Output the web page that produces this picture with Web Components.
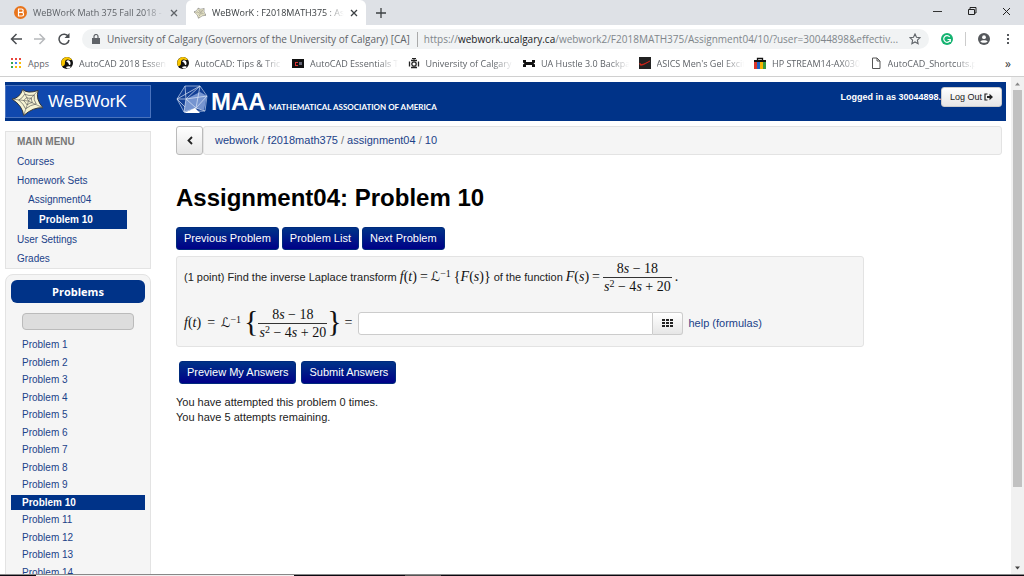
<!DOCTYPE html>
<html lang="en">
<head>
<meta charset="utf-8">
<title>WeBWorK : F2018MATH375 : Assignment04 : 10</title>
<style>
    html, body {
        height: 100%;
        margin: 0;
    }
    body {
        --blue: #003388;
        --link: #1b4289;
        --well: #f5f5f5;
        --line: #e3e3e3;
        --ui: "Open Sans", "Noto Sans", sans-serif;
        display: flex;
        flex-direction: column;
        overflow: hidden;
        background: #fff;
        color: #222;
        font: 10px/15px "Liberation Sans", Arial, sans-serif;
    }
</style>
</head>
<body>
    <browser-tabs></browser-tabs>
    <browser-toolbar></browser-toolbar>
    <bookmark-bar>
        <bookmark-link label="AutoCAD 2018 Essen" icon="lynda"></bookmark-link>
        <bookmark-link label="AutoCAD: Tips &amp; Tric" icon="lynda"></bookmark-link>
        <bookmark-link label="AutoCAD Essentials T" icon="dark"></bookmark-link>
        <bookmark-link label="University of Calgary" icon="crest"></bookmark-link>
        <bookmark-link label="UA Hustle 3.0 Backpa" icon="ua"></bookmark-link>
        <bookmark-link label="ASICS Men's Gel Excit" icon="swoosh"></bookmark-link>
        <bookmark-link label="HP STREAM14-AX030" icon="bag"></bookmark-link>
        <bookmark-link label="AutoCAD_Shortcuts.p" icon="file"></bookmark-link>
    </bookmark-bar>
    <page-view>
        <ww-header slot="header" user="30044898"></ww-header>
        <ww-menu slot="side"></ww-menu>
        <ww-problems slot="side" count="14" current="10"></ww-problems>
        <ww-breadcrumb></ww-breadcrumb>
        <ww-problem heading="Assignment04: Problem 10">
            <ww-button slot="nav">Previous Problem</ww-button>
            <ww-button slot="nav">Problem List</ww-button>
            <ww-button slot="nav">Next Problem</ww-button>
            <ww-question></ww-question>
            <ww-button slot="actions">Preview My Answers</ww-button>
            <ww-button slot="actions">Submit Answers</ww-button>
            <div slot="status">You have attempted this problem 0 times.</div>
            <div slot="status">You have 5 attempts remaining.</div>
        </ww-problem>
    </page-view>
    <task-bar></task-bar>

<script>
class Base extends HTMLElement {
    connectedCallback() {
        if (this.shadowRoot) {
            return;
        }
        const template = document.createElement("template");
        template.innerHTML = "<style>:host, * { box-sizing: border-box; }</style>" + this.render();
        this.attachShadow({mode: "open"}).appendChild(template.content);
    }
}

const star = `
    <svg viewBox="0 0 32 28" class="star">
        <path d="M0 11Q8 10 11 1 16 6 27 2 24 11 32 20 22 19 12 28 11 18 0 11Z" fill="#f6f3d3" stroke="#333" stroke-width="1"/>
        <path d="M0 11 17 13M11 1 17 13M27 2 17 13M32 20 17 13M12 28 17 13" stroke="#555" stroke-width=".6"/>
        <path d="M7 12Q11 10 13 6 17 8 23 7 22 12 25 16 19 17 14 21 12 16 7 12ZM12 12.500Q14 11 15 9.500 17 10.500 20 10 20 12.500 21 14.500 18 15 15.500 17 14 14.500 12 12.500Z" fill="none" stroke="#555" stroke-width=".7"/>
    </svg>`;

customElements.define("browser-tabs", class extends Base {
    render() {
        return `
            <style>
                :host { display: flex; height: 25px; background: #dee1e6; font: 9px/25px var(--ui); color: #5f6368; }
                .tab { display: flex; align-items: center; gap: 6px; width: 180px; padding: 0 8px; }
                .tab.first { padding-left: 6px; margin-left: 8px; width: 178px; }
                .active { background: #fff; border-radius: 6px 6px 0 0; color: #3c4043; }
                .name { flex: 1; min-width: 0; white-space: nowrap; mask-image: linear-gradient(90deg, #000 85%, transparent); }
                button { padding: 0; border: 0; background: none; display: flex; }
                svg { flex: none; }
                .star { width: 12px; height: 12px; }
                .new { align-self: center; margin-left: 10px; }
                .window { display: flex; align-items: center; gap: 25px; margin: 0 13px 3px auto; }
            </style>
            <div class="tab first">
                <svg width="13" height="13" viewBox="0 0 13 13"><circle cx="6.500" cy="6.500" r="6.500" fill="#e8741c"/><path d="M4 3h3.500a1.700 1.700 0 0 1 0 3.400H5M4.500 3v7h3.300a1.800 1.800 0 0 0 0-3.600" fill="none" stroke="#fff" stroke-width="1.200"/></svg>
                <span class="name">WeBWorK Math 375 Fall 2018 - M</span>
                <button aria-label="Close tab"><svg width="8" height="8" viewBox="0 0 8 8"><path d="M1 1l6 6M7 1l-6 6" stroke="#5f6368" stroke-width="1.300"/></svg></button>
            </div>
            <div class="tab active">
                ${star}
                <span class="name">WeBWorK : F2018MATH375 : Ass</span>
                <button aria-label="Close tab"><svg width="8" height="8" viewBox="0 0 8 8"><path d="M1 1l6 6M7 1l-6 6" stroke="#3c4043" stroke-width="1.300"/></svg></button>
            </div>
            <button class="new" aria-label="New tab"><svg width="10" height="10" viewBox="0 0 10 10"><path d="M5 0v10M0 5h10" stroke="#3c4043" stroke-width="1.300"/></svg></button>
            <div class="window">
                <button aria-label="Minimize"><svg width="9" height="9" viewBox="0 0 9 9"><path d="M0 4.500h9" stroke="#333"/></svg></button>
                <button aria-label="Restore"><svg width="10" height="10" viewBox="0 0 10 10"><path d="M1.500 3.500h6v5h-6zM3 3V1.500h6V7H8" fill="none" stroke="#222"/></svg></button>
                <button aria-label="Close"><svg width="9" height="9" viewBox="0 0 9 9"><path d="M1 1l7 7M8 1L1 8" stroke="#222"/></svg></button>
            </div>`;
    }
});

customElements.define("browser-toolbar", class extends Base {
    render() {
        return `
            <style>
                :host { display: flex; align-items: center; gap: 12px; height: 28px; padding: 0 10px; background: #fff; }
                button { padding: 0; border: 0; background: none; display: flex; }
                svg { flex: none; }
                .box { flex: 1; display: flex; align-items: center; height: 20px; padding: 0 8px 0 10px; border-radius: 10px; background: #f1f3f4; min-width: 0; }
                .site { padding: 0 7px; font: 10px/15px var(--ui); color: #5f6368; white-space: nowrap; }
                .url { flex: 1; padding: 0 6px; border-left: 1px solid #aaa; font: 10px/15px var(--ui); color: #80868b; white-space: nowrap; }
                .url b { font-weight: 400; color: #202124; }
                .sep { width: 1px; height: 14px; background: #ccc; }
            </style>
            <button aria-label="Back"><svg width="12" height="12" viewBox="0 0 12 12"><path d="M12 6H2M6.500 1l-5 5 5 5" fill="none" stroke="#4a4d51" stroke-width="1.500"/></svg></button>
            <button aria-label="Forward"><svg width="12" height="12" viewBox="0 0 12 12"><path d="M0 6h10M5.500 1l5 5-5 5" fill="none" stroke="#b7b9bc" stroke-width="1.500"/></svg></button>
            <button aria-label="Reload"><svg width="12" height="12" viewBox="0 0 12 12"><path d="M10.300 3.500A5 5 0 1 0 11 7" fill="none" stroke="#4a4d51" stroke-width="1.500"/><path d="M11.500 0v5h-5z" fill="#4a4d51"/></svg></button>
            <div class="box">
                <svg width="8" height="10" viewBox="0 0 8 10"><path d="M0 4h8v6H0z" fill="#5f6368"/><path d="M2 4V2.500a2 2 0 0 1 4 0V4" fill="none" stroke="#5f6368" stroke-width="1.200"/></svg>
                <span class="site">University of Calgary (Governors of the University of Calgary) [CA]</span>
                <span class="url">https://<b>webwork.ucalgary.ca</b>/webwork2/F2018MATH375/Assignment04/10/?user=30044898&amp;effectiv...</span>
                <button aria-label="Bookmark"><svg width="12" height="12" viewBox="0 0 12 12"><path d="M6 1l1.500 3.300 3.500.4-2.600 2.400.7 3.600L6 8.900l-3.100 1.800.7-3.600L1 4.700l3.500-.4z" fill="none" stroke="#5f6368" stroke-width="1.100"/></svg></button>
            </div>
            <svg width="12" height="12" viewBox="0 0 12 12"><circle cx="6" cy="6" r="6" fill="#15b371"/><path d="M8.700 4A3.300 3.300 0 1 0 9.300 6.500H6.500M9.300 6.500V9" fill="none" stroke="#fff" stroke-width="1.200"/></svg>
            <span class="sep"></span>
            <svg width="12" height="12" viewBox="0 0 12 12"><circle cx="6" cy="6" r="6" fill="#55585c"/><circle cx="6" cy="4.200" r="1.900" fill="#fff"/><path d="M2.300 8.500C3.500 6.800 8.500 6.800 9.700 8.500 8.500 10.200 3.500 10.200 2.300 8.500Z" fill="#fff"/></svg>
            <button aria-label="Menu"><svg width="12" height="12" viewBox="0 0 12 12" fill="#55585c"><path d="M5 1h2v2H5zM5 5h2v2H5zM5 9h2v2H5z"/></svg></button>`;
    }
});

customElements.define("bookmark-bar", class extends Base {
    render() {
        return `
            <style>
                :host { display: flex; align-items: center; height: 24px; padding: 0 13px 3px 11px; border-bottom: 1px solid #d0d0d0; background: #fff; font: 9px/15px var(--ui); color: #5f6368; }
                .apps { display: flex; align-items: center; gap: 7px; width: 50px; color: inherit; text-decoration: none; }
                .items { flex: 1; display: flex; min-width: 0; }
                .more { width: 26px; font-size: 12px; text-align: right; color: #333; }
            </style>
            <a class="apps" href="#"><svg width="10" height="10" viewBox="0 0 10 10"><path d="M0 0h2v2H0zM4 0h2v2H4zM8 0h2v2H8z" fill="#e8453c"/><path d="M0 4h2v2H0zM0 8h2v2H0z" fill="#34a853"/><path d="M4 4h2v2H4z" fill="#4285f4"/><path d="M8 4h2v2H8zM4 8h2v2H4zM8 8h2v2H8z" fill="#fbbc05"/></svg>Apps</a>
            <div class="items"><slot></slot></div>
            <span class="more">»</span>`;
    }
});

const bookmarkIcons = {
    lynda: `<circle cx="6" cy="6" r="6" fill="#111"/><path d="M6 0A6 6 0 0 0 1 9C4 9 4 7 4 5 4 3 6 2 8 3L11 3A6 6 0 0 0 6 0Z" fill="#f8c500"/><path d="M5 4.500C7 2 10 4 9.500 7 9 9 8 8 7.500 6.500 7 5 6 5 5 4.500ZM5 10c2-1 4-1 5 0-2 2-4 2-5 0Z" fill="#fff"/>`,
    dark: `<path d="M0 2h12v9H0z" fill="#111"/><path d="M3 5h3v1H4v2h2v1H3z" fill="#d33"/><path d="M7 5h3v3H7z" fill="#667"/>`,
    crest: `<path d="M3 3.500h6M1.500 4.500v5M10.500 4.500v5M3 10.500h6" stroke="#222" stroke-width="1.300"/><path d="M4 1.500h4M6 1v2" stroke="#222"/><circle cx="6" cy="7" r="2.200" fill="#fff" stroke="#222" stroke-width="1.300"/>`,
    ua: `<path d="M0 3h3v2h6V3h3v2.500L10.500 6.500 12 7.500V10H9V8H3v2H0V7.500L1.500 6.500 0 5.500Z" fill="#111"/>`,
    swoosh: `<path d="M0 0h12v12H0z" fill="#222"/><path d="M1 6c0 3 4 1 10-2C6 7 3 9 1 8z" fill="#e2231a" stroke="#e2231a" stroke-width=".6"/>`,
    bag: `<path d="M3.500 5V1.500h5V5" fill="none" stroke="#111" stroke-width="1.300"/><path d="M0 3h12v2H0z" fill="#111"/><path d="M0 5h3v7H0z" fill="#d8352a"/><path d="M3 5h3v7H3z" fill="#1c64c8"/><path d="M6 5h3v7H6z" fill="#f5b400"/><path d="M9 5h3v7H9z" fill="#3a9b3f"/>`,
    file: `<path d="M2.500 1h4.500l3 3v7.500H2.500zM7 1v3h3" fill="none" stroke="#555"/>`
};

customElements.define("bookmark-link", class extends Base {
    render() {
        return `
            <style>
                :host { flex: 1; display: block; min-width: 0; }
                a { display: flex; align-items: center; gap: 6px; padding-right: 8px; color: inherit; text-decoration: none; }
                svg { flex: none; }
                span { flex: 1; white-space: nowrap; mask-image: linear-gradient(90deg, #000 75%, transparent 98%); }
            </style>
            <a href="#"><svg width="12" height="12" viewBox="0 0 12 12">${bookmarkIcons[this.getAttribute("icon")]}</svg><span>${this.getAttribute("label")}</span></a>`;
    }
});

customElements.define("page-view", class extends Base {
    render() {
        return `
            <style>
                :host { flex: 1; display: flex; min-height: 0; }
                .page { flex: 1; min-width: 0; padding: 5px 5px 0; overflow: hidden; }
                .columns { display: grid; grid-template-columns: 146px 1fr; column-gap: 25px; }
                .side { display: flex; flex-direction: column; gap: 5px; padding-top: 10px; }
                main { min-width: 0; padding: 5px 4px 0 0; }
                .scroll { display: flex; flex-direction: column; align-items: center; width: 13px; padding: 5px 0 4px; background: #f1f1f1; }
                .scroll svg { flex: none; }
                .thumb { flex: 5; width: 9px; margin-top: 4px; background: #c1c1c1; }
                .rest { flex: 1; }
            </style>
            <div class="page">
                <slot name="header"></slot>
                <div class="columns">
                    <div class="side"><slot name="side"></slot></div>
                    <main><slot></slot></main>
                </div>
            </div>
            <div class="scroll">
                <svg width="5" height="4" viewBox="0 0 5 4"><path d="M0 3.500 2.500.5 5 3.500z" fill="#888"/></svg>
                <div class="thumb"></div>
                <div class="rest"></div>
                <svg width="5" height="4" viewBox="0 0 5 4"><path d="M0 .5 2.500 3.500 5 .5z" fill="#444"/></svg>
            </div>`;
    }
});

customElements.define("ww-header", class extends Base {
    render() {
        return `
            <style>
                :host { display: flex; align-items: flex-start; height: 39px; padding-top: 3px; background: var(--blue); color: #fff; }
                .logo { display: flex; align-items: center; gap: 5px; width: 146px; height: 33px; padding-left: 6px; border: 1px solid #4a73bd; background: #1048ae; color: #fff; font-size: 17px; line-height: 20px; text-decoration: none; }
                .star { width: 31px; height: 28px; }
                .maa { display: flex; align-items: baseline; gap: 3px; margin-left: 25px; color: #fff; text-decoration: none; font-weight: 700; }
                .maa svg { align-self: flex-start; width: 32px; height: 30px; }
                .maa .big { font-size: 24px; line-height: 34px; }
                .maa .small { font: 700 8px/15px Lato, sans-serif; }
                .login { display: flex; align-items: center; margin: 2px 4px 0 auto; font-size: 9px; font-weight: 700; line-height: 20px; }
                button { display: flex; align-items: center; gap: 2px; height: 20px; padding: 0 8px; border: 1px solid #ccc; border-radius: 3px; background: linear-gradient(#fff, #e6e6e6); color: #222; font: 9px/18px "Liberation Sans", sans-serif; }
            </style>
            <a class="logo" href="#">${star}WeBWorK</a>
            <a class="maa" href="#">
                <svg viewBox="0 0 32 30"><path d="M9 1 24 1 31 11 29 26 8 27 1 14Z" fill="#123f95" stroke="#a8bde0" stroke-width=".8"/><path d="M10 14 24 7 31 11 28 25 19 23 8 27Z" fill="#7594d0"/><path d="M9 1 10 14 24 1M10 14 1 14M10 14 31 11M10 14 8 27M10 14 20 23 31 11M20 23 29 26M20 23 8 27M1 14 24 1M1 14 9 22M24 1 20 23" fill="none" stroke="#dbe5f5" stroke-width=".7"/><path d="M8 28 19 23 24 28Z" fill="#fff"/></svg>
                <span class="big">MAA</span>
                <span class="small">MATHEMATICAL ASSOCIATION OF AMERICA</span>
            </a>
            <div class="login">
                <span>Logged in as ${this.getAttribute("user")}.</span>
                <button>Log Out <svg width="9" height="8" viewBox="0 0 9 8"><path d="M3.500 1H1v6h2.500" fill="none" stroke="#222" stroke-width="1.200"/><path d="M3 3h2.500V.800L9 4 5.500 7.200V5H3z" fill="#222"/></svg></button>
            </div>`;
    }
});

customElements.define("ww-menu", class extends Base {
    render() {
        return `
            <style>
                :host { display: block; padding: 0 11px; border: 1px solid var(--line); background: var(--well); line-height: 19px; }
                h2 { margin: 0 0 1px; font: inherit; font-weight: 700; color: #777; }
                ul { margin: 0; padding: 0; list-style: none; }
                ul ul { padding: 0 12px 0 11px; margin-bottom: 1px; }
                ul ul ul { margin: 1px 0 0; padding: 0; }
                a { display: block; color: var(--link); text-decoration: none; }
                .current { padding-left: 11px; background: var(--blue); color: #fff; font-weight: 700; }
            </style>
            <h2>MAIN MENU</h2>
            <ul>
                <li><a href="#">Courses</a></li>
                <li><a href="#">Homework Sets</a>
                    <ul>
                        <li><a href="#">Assignment04</a>
                            <ul><li><a class="current" href="#">Problem 10</a></li></ul>
                        </li>
                    </ul>
                </li>
                <li><a href="#">User Settings</a></li>
                <li><a href="#">Grades</a></li>
            </ul>`;
    }
});

customElements.define("ww-problems", class extends Base {
    render() {
        const current = Number(this.getAttribute("current"));
        let items = "";
        for (let i = 1; i <= Number(this.getAttribute("count")); i++) {
            items += `<li><a href="#"${i === current ? ' class="current"' : ""}>Problem ${i}</a></li>`;
        }
        return `
            <style>
                :host { display: block; padding: 5px; border: 1px solid var(--line); border-radius: 8px; background: var(--well); }
                h2 { margin: 0; border-radius: 6px; background: var(--blue); color: #fff; font: 700 11px/23px var(--ui); text-align: center; }
                .bar { height: 17px; margin: 10px 11px 7px; border: 1px solid #bbb; border-radius: 4px; background: #ddd; }
                ul { margin: 0; padding: 0; list-style: none; }
                li { margin-bottom: 2px; }
                li:nth-child(odd) { margin-bottom: 3px; }
                a { display: block; padding-left: 11px; color: var(--link); text-decoration: none; }
                .current { background: var(--blue); color: #fff; font-weight: 700; }
            </style>
            <h2>Problems</h2>
            <div class="bar"></div>
            <ul>${items}</ul>`;
    }
});

customElements.define("ww-breadcrumb", class extends Base {
    render() {
        return `
            <style>
                :host { display: flex; height: 29px; font-size: 11px; }
                button { display: flex; align-items: center; justify-content: center; width: 27px; padding: 0; border: 1px solid #bbb; border-radius: 3px; background: linear-gradient(#fff, #e6e6e6); }
                nav { flex: 1; padding: 0 11px; border: 1px solid var(--line); border-radius: 3px; background: var(--well); line-height: 27px; color: #777; }
                a { color: var(--link); text-decoration: none; }
            </style>
            <button aria-label="Up"><svg width="6" height="9" viewBox="0 0 6 9"><path d="M5 1 1.500 4.500 5 8" fill="none" stroke="#222" stroke-width="1.800"/></svg></button>
            <nav><a href="#">webwork</a> / <a href="#">f2018math375</a> / <a href="#">assignment04</a> / <a href="#">10</a></nav>`;
    }
});

customElements.define("ww-button", class extends Base {
    render() {
        return `
            <style>
                :host { display: block; }
                button { display: block; height: 23px; padding: 0 7px; border: 1px solid #002a7c; border-radius: 3px; background: linear-gradient(#003388, #000088); color: #fff; font: 11px/21px "Liberation Sans", sans-serif; }
            </style>
            <button><slot></slot></button>`;
    }
});

customElements.define("ww-problem", class extends Base {
    render() {
        return `
            <style>
                :host { display: block; font-size: 11px; }
                h1 { margin: 28px 0 14px; font-size: 24px; line-height: 30px; color: #000; }
                .nav { display: flex; gap: 3px; margin-bottom: 6px; }
                .actions { display: flex; gap: 5px; margin: 14px 3px 11px; }
            </style>
            <h1>${this.getAttribute("heading")}</h1>
            <div class="nav"><slot name="nav"></slot></div>
            <slot></slot>
            <div class="actions"><slot name="actions"></slot></div>
            <slot name="status"></slot>`;
    }
});

// numerator over denominator, each passed in by slot
customElements.define("math-frac", class extends Base {
    render() {
        return `
            <style>
                :host { display: inline-flex; flex-direction: column; line-height: 17px; text-align: center; }
                div { padding: 0 1px; }
                .num { border-bottom: 1px solid #333; }
            </style>
            <div class="num"><slot name="num"></slot></div>
            <div><slot name="den"></slot></div>`;
    }
});

customElements.define("ww-question", class extends Base {
    render() {
        const frac = `
            <math-frac>
                <span slot="num">8<i>s</i> − 18</span>
                <span slot="den"><i>s</i><sup>2</sup> − 4<i>s</i> + 20</span>
            </math-frac>`;
        const inverse = `<span class="cal">ℒ</span><sup>−1</sup>`;
        return `
            <style>
                :host { display: block; width: 83.3%; padding: 2px 7px 5px; border: 1px solid var(--line); border-radius: 3px; background: var(--well); }
                .row { display: flex; align-items: center; height: 36px; gap: 3px; white-space: nowrap; }
                .answer { margin-top: 10px; }
                .math { display: inline-flex; align-items: center; gap: 3px; font: 14px/18px "Liberation Serif", serif; color: #111; }
                .answer .math { gap: 6px; }
                .answer .group { gap: 0; }
                .cal { font: 13px/18px "DejaVu Serif", "DejaVu Sans", serif; }
                sup { font-size: 10px; line-height: 0; vertical-align: 4px; }
                .brace { font-size: 30px; line-height: 32px; padding-bottom: 4px; }
                .field { display: flex; width: 325px; height: 23px; margin: 0 2px 0 3px; }
                input { flex: 1; min-width: 0; padding: 0 4px; border: 1px solid #ccc; border-radius: 3px 0 0 3px; background: #fff; font: 11px/15px "Liberation Sans", sans-serif; }
                button { width: 30px; padding: 0; border: 1px solid #ccc; border-left: 0; border-radius: 0 3px 3px 0; background: linear-gradient(#fff, #e6e6e6); }
                button svg { display: block; margin: auto; }
                a { color: var(--link); text-decoration: none; }
            </style>
            <div class="row">
                <span>(1 point) Find the inverse Laplace transform</span>
                <span class="math"><span><i>f</i>(<i>t</i>)</span><span>=</span><span>${inverse}</span><span>{<i>F</i>(<i>s</i>)}</span></span>
                <span>of the function</span>
                <span class="math"><span><i>F</i>(<i>s</i>)</span><span>=</span>${frac}<span>.</span></span>
            </div>
            <div class="row answer">
                <span class="math"><span><i>f</i>(<i>t</i>)</span><span>=</span><span>${inverse}</span></span>
                <span class="math group"><span class="brace">{</span>${frac}<span class="brace">}</span></span>
                <span class="math">=</span>
                <div class="field">
                    <input type="text" aria-label="Answer">
                    <button aria-label="Equation editor"><svg width="11" height="9" viewBox="0 0 11 9" fill="#222"><path d="M0 0h3v2H0zM4 0h3v2H4zM8 0h3v2H8zM0 3h3v2H0zM4 3h3v2H4zM8 3h3v2H8zM0 6h3v2H0zM4 6h3v2H4zM8 6h3v2H8z"/></svg></button>
                </div>
                <a href="#">help (formulas)</a>
            </div>`;
    }
});

customElements.define("task-bar", class extends Base {
    render() {
        return `
            <style>
                :host { display: flex; height: 2px; border-top: 1px solid #888; background: #0b0810; }
                .search { width: 258px; margin-left: 36px; background: #f0f0f0; }
                .app { width: 36px; margin-left: 111px; background: #555; }
            </style>
            <div class="search"></div>
            <div class="app"></div>`;
    }
});
</script>
</body>
</html>
